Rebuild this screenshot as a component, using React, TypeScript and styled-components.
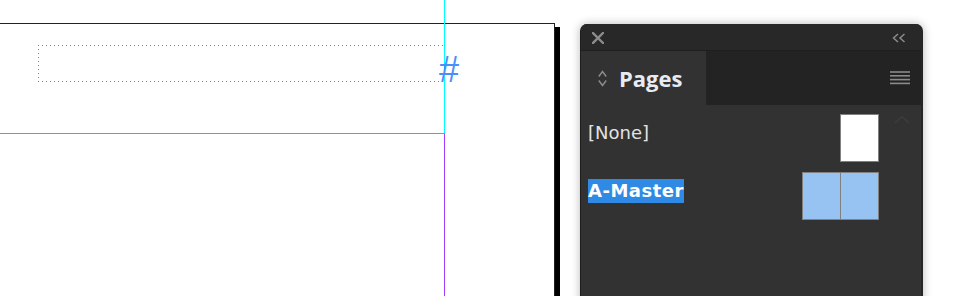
import styled, { createGlobalStyle } from 'styled-components';

const GlobalStyle = createGlobalStyle`
  html, body {
    margin: 0;
    padding: 0;
    background: #ffffff;
    overflow: hidden;
  }
  body {
    font-family: 'DejaVu Sans', 'Liberation Sans', sans-serif;
  }
`;

const Screen = styled.div`
  display: flex;
  width: 960px;
  height: 296px;
  overflow: hidden;
`;

const Canvas = styled.div`
  position: relative;
  width: 580px;
  height: 296px;
  flex-shrink: 0;
`;

const Page = styled.div`
  margin-top: 23px;
  width: 554px;
  height: 300px;
  background: #fff;
  border-top: 1px solid #222;
  border-right: 1px solid #222;
  box-shadow: 5px 4px 0 #000;
`;

const dots = '#4f88ea';

const TextFrame = styled.div`
  position: absolute;
  left: 38px;
  top: 45px;
  width: 406px;
  height: 37px;
  background:
    linear-gradient(to right, ${dots} 1px, transparent 1px) left top / 4px 1px repeat-x,
    linear-gradient(to right, ${dots} 1px, transparent 1px) left bottom / 4px 1px repeat-x,
    linear-gradient(to bottom, ${dots} 1px, transparent 1px) left top / 1px 4px repeat-y;
`;

const PageNumberMarker = styled.span`
  position: absolute;
  left: 439px;
  top: 52px;
  font-family: 'Liberation Sans', Arial, sans-serif;
  font-size: 36px;
  line-height: 36px;
  color: #4a8ef8;
`;

const Guide = styled.div<{ $color: string; $vertical?: boolean }>`
  position: absolute;
  background: ${(p) => p.$color};
  ${(p) => (p.$vertical ? 'width: 1px;' : 'height: 1px;')}
`;

const Panel = styled.div`
  width: 343px;
  margin-top: 24px;
  height: 290px;
  flex-shrink: 0;
  background: #323232;
  border-radius: 7px 7px 0 0;
  box-shadow: 0 0 10px rgba(0, 0, 0, 0.28);
  display: flex;
  flex-direction: column;
  overflow: hidden;
  border-left: 1px solid #1e1e1e;
  border-right: 2px solid #262626;
  box-sizing: border-box;
`;

const TitleBar = styled.div`
  height: 27px;
  flex-shrink: 0;
  display: flex;
  align-items: center;
  justify-content: space-between;
  padding: 2px 15px 0 11px;
  box-sizing: border-box;
  background: #282828;
  border-bottom: 1px solid #1f1f1f;
`;

const TabBar = styled.div`
  height: 54px;
  flex-shrink: 0;
  display: flex;
  align-items: stretch;
  justify-content: space-between;
  background: #232323;
`;

const Tab = styled.div`
  width: 125px;
  display: flex;
  align-items: center;
  gap: 12px;
  padding-left: 17px;
  box-sizing: border-box;
  background: #323232;
`;

const TabLabel = styled.span`
  font-family: 'Open Sans', 'DejaVu Sans', sans-serif;
  font-weight: 700;
  font-size: 22px;
  color: #e8ecf2;
  line-height: 1;
`;

const MenuButton = styled.div`
  display: flex;
  align-items: center;
  padding-right: 11px;
`;

const Content = styled.div`
  flex: 1;
  display: flex;
`;

const MasterList = styled.div`
  flex: 1;
  display: flex;
  flex-direction: column;
  gap: 10px;
  padding: 9px 0 0 7px;
`;

const MasterRow = styled.div`
  display: flex;
  justify-content: space-between;
  align-items: flex-start;
`;

const MasterName = styled.span<{ $selected?: boolean }>`
  margin-top: 7px;
  font-size: 18px;
  line-height: 24px;
  white-space: nowrap;
  color: ${(p) => (p.$selected ? '#ffffff' : '#e2e2e2')};
  font-weight: ${(p) => (p.$selected ? 700 : 400)};
  letter-spacing: ${(p) => (p.$selected ? '0.5px' : '0')};
  background: ${(p) => (p.$selected ? '#2f8ae6' : 'transparent')};
`;

const Thumb = styled.div`
  display: flex;
  border: 1px solid #808080;
`;

const ThumbPage = styled.div<{ $selected?: boolean }>`
  width: 37px;
  height: 46px;
  background: ${(p) => (p.$selected ? '#97c3f3' : '#ffffff')};
  & + & {
    border-left: 1px solid #808080;
  }
`;

const ScrollColumn = styled.div`
  width: 42px;
  display: flex;
  justify-content: center;
  padding-top: 10px;
  padding-left: 4px;
  box-sizing: border-box;
`;

function CloseIcon() {
  return (
    <svg width="12" height="12" viewBox="0 0 12 12">
      <path d="M1 1 L11 11 M11 1 L1 11" stroke="#8c8c8c" strokeWidth="2.4" strokeLinecap="square" fill="none" />
    </svg>
  );
}

function CollapseIcon() {
  return (
    <svg width="14" height="10" viewBox="0 0 14 10">
      <path d="M6 1 L1.5 5 L6 9 M12.5 1 L8 5 L12.5 9" stroke="#8c8c8c" strokeWidth="1.5" fill="none" />
    </svg>
  );
}

function UpDownIcon() {
  return (
    <svg width="9" height="17" viewBox="0 0 9 17">
      <path d="M0.8 6.5 L4.5 1.5 L8.2 6.5 M0.8 10.5 L4.5 15.5 L8.2 10.5" stroke="#8a8a8a" strokeWidth="1.5" fill="none" />
    </svg>
  );
}

function MenuIcon() {
  return (
    <svg width="20" height="14" viewBox="0 0 20 14">
      {[1, 4.8, 8.6, 12.4].map((y) => (
        <rect key={y} x="0" y={y - 0.8} width="20" height="1.6" fill="#8a8a8a" />
      ))}
    </svg>
  );
}

function ScrollUpIcon() {
  return (
    <svg width="16" height="9" viewBox="0 0 16 9">
      <path d="M1 8 L8 1.5 L15 8" stroke="#3d3d3d" strokeWidth="1.5" fill="none" />
    </svg>
  );
}

export default function App() {
  return (
    <>
      <GlobalStyle />
      <Screen>
        <Canvas>
          <Page />
          <TextFrame />
          <Guide $color="#00ffff" $vertical style={{ left: 444, top: 0, height: 134 }} />
          <Guide $color="#e05ae8" style={{ left: 0, top: 133, width: 445 }} />
          <Guide $color="#a43cff" $vertical style={{ left: 444, top: 134, height: 162 }} />
          <PageNumberMarker>#</PageNumberMarker>
        </Canvas>
        <Panel>
          <TitleBar>
            <CloseIcon />
            <CollapseIcon />
          </TitleBar>
          <TabBar>
            <Tab>
              <UpDownIcon />
              <TabLabel>Pages</TabLabel>
            </Tab>
            <MenuButton>
              <MenuIcon />
            </MenuButton>
          </TabBar>
          <Content>
            <MasterList>
              <MasterRow>
                <MasterName>[None]</MasterName>
                <Thumb>
                  <ThumbPage />
                </Thumb>
              </MasterRow>
              <MasterRow>
                <MasterName $selected>A-Master</MasterName>
                <Thumb>
                  <ThumbPage $selected />
                  <ThumbPage $selected />
                </Thumb>
              </MasterRow>
            </MasterList>
            <ScrollColumn>
              <ScrollUpIcon />
            </ScrollColumn>
          </Content>
        </Panel>
      </Screen>
    </>
  );
}
